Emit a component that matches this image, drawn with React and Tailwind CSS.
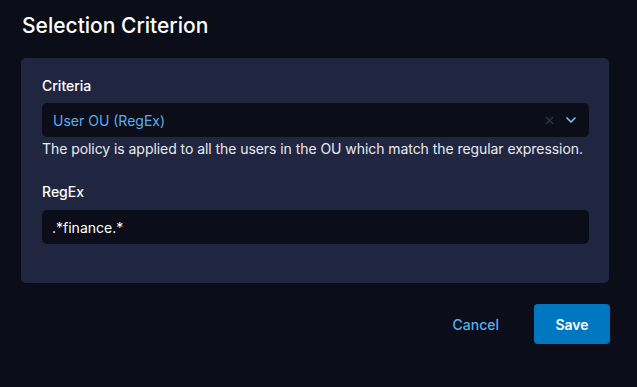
import React from 'react';
import { X, ChevronDown } from 'lucide-react';

const App = () => {
  return (
    <div className="w-[637px] h-[387px] bg-[#0b0e19] text-white px-[21px] pt-[12px]" style={{ fontFamily: 'Inter, "Noto Sans", sans-serif' }}>
      <h2 className="text-[21px] leading-[28px] font-medium pl-px">Selection Criterion</h2>
      <div className="mt-[18px] w-[588px] bg-[#212640] rounded-[5px] pl-[21px] pr-[20px] pt-[18px] pb-[39px]">
        <label className="block text-[14px] leading-[20px] font-medium">Criteria</label>
        <div className="mt-[7px] h-[34px] bg-[#0b0e19] rounded-[5px] flex items-center pl-[11px] pr-[10px]">
          <span className="flex-1 text-[14px] text-[#5aaef0]">User OU (RegEx)</span>
          <X size={13} strokeWidth={2.5} className="text-[#2e3342]" />
          <ChevronDown size={16} strokeWidth={2.5} className="ml-[7px] text-[#7cc4f5]" />
        </div>
        <p className="mt-[2px] text-[14px] leading-[20px] tracking-[-0.06px] text-[#e8eaf0]">The policy is applied to all the users in the OU which match the regular expression.</p>
        <label className="block mt-[23px] text-[14px] leading-[20px] font-medium">RegEx</label>
        <div className="mt-[8px] h-[34px] bg-[#0b0e19] rounded-[5px] flex items-center pl-[10px]">
          <span className="text-[14px] text-white">.*finance.*</span>
        </div>
      </div>
      <div className="mt-[21px] w-[589px] flex justify-end items-center">
        <button className="text-[14px] font-medium text-[#5aaef0] mr-[35px]">Cancel</button>
        <button className="w-[76px] h-[40px] rounded-[4px] bg-[#0077c0] text-[14px] font-semibold text-white">Save</button>
      </div>
    </div>
  );
};

export default App;
